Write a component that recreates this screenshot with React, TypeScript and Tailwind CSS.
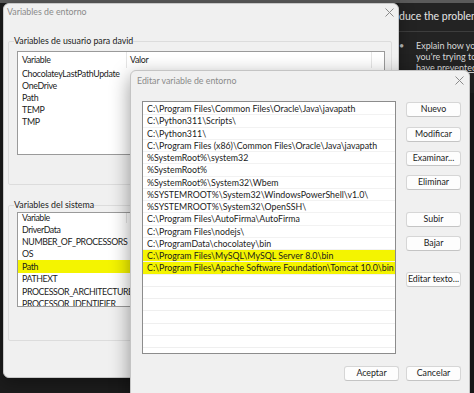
import React from 'react';

const font = { fontFamily: 'Lato, "Noto Sans", "Liberation Sans", sans-serif' };

const userVars = ['ChocolateyLastPathUpdate', 'OneDrive', 'Path', 'TEMP', 'TMP'];

const systemVars = [
  'DriverData',
  'NUMBER_OF_PROCESSORS',
  'OS',
  'Path',
  'PATHEXT',
  'PROCESSOR_ARCHITECTURE',
  'PROCESSOR_IDENTIFIER',
];

const paths = [
  'C:\\Program Files\\Common Files\\Oracle\\Java\\javapath',
  'C:\\Python311\\Scripts\\',
  'C:\\Python311\\',
  'C:\\Program Files (x86)\\Common Files\\Oracle\\Java\\javapath',
  '%SystemRoot%\\system32',
  '%SystemRoot%',
  '%SystemRoot%\\System32\\Wbem',
  '%SYSTEMROOT%\\System32\\WindowsPowerShell\\v1.0\\',
  '%SYSTEMROOT%\\System32\\OpenSSH\\',
  'C:\\Program Files\\AutoFirma\\AutoFirma',
  'C:\\Program Files\\nodejs\\',
  'C:\\ProgramData\\chocolatey\\bin',
  'C:\\Program Files\\MySQL\\MySQL Server 8.0\\bin',
  'C:\\Program Files\\Apache Software Foundation\\Tomcat 10.0\\bin',
];

function CloseIcon() {
  return (
    <svg width="9" height="9" viewBox="0 0 9 9" className="block">
      <path d="M0.5 0.5 L8.5 8.5 M8.5 0.5 L0.5 8.5" stroke="#8a8a8a" strokeWidth="1" fill="none" />
    </svg>
  );
}

function Btn({ label, className = '' }: { label: string; className?: string }) {
  return (
    <div
      className={
        'w-[55px] h-[15px] flex items-center justify-center whitespace-nowrap rounded-[3px] border border-[#d6d6d6] border-b-[#c4c4c4] bg-[#fdfdfd] text-[8.8px] text-[#1b1b1b] leading-none ' +
        className
      }
    >
      {label}
    </div>
  );
}

function EnvWindow() {
  return (
    <div className="absolute left-[3px] top-[3px] w-[396px] h-[375px] bg-[#f0f0f0] border border-[#c8c8c8] rounded-[6px] shadow-[0_4px_16px_rgba(0,0,0,0.35)] overflow-hidden">
      <div className="h-[16px] pl-[3px] flex items-center text-[8.8px] text-[#8a8a8a] justify-between pr-[4px]">
        <span>Variables de entorno</span>
        <CloseIcon />
      </div>
      <div className="px-[4px] pt-[14px] flex flex-col">
        <fieldset className="w-[384px] border border-[#dcdcdc] pl-[8px] pt-[3px] pb-[29px] rounded-[2px]">
          <legend className="-ml-[3px] text-[8.8px] leading-[14px] text-[#1b1b1b]">Variables de usuario para david</legend>
          <div className="w-[368px] h-[104px] bg-white border border-[#9a9a9a] overflow-hidden tracking-[-0.3px]">
            <div className="h-[16px] flex text-[8.8px] text-[#1b1b1b] items-center">
              <div className="w-[109px] pl-[4px] h-full flex items-center border-r border-[#e5e5e5]">Variable</div>
              <div className="w-[245px] pl-[3px] h-full flex items-center border-r border-[#e5e5e5]">Valor</div>
            </div>
            {userVars.map((v) => (
              <div key={v} className="h-[12px] pl-[4px] flex items-center text-[8.8px] text-[#1b1b1b]">
                {v}
              </div>
            ))}
          </div>
        </fieldset>
        <fieldset className="mt-[13px] w-[384px] border border-[#dcdcdc] pl-[8px] pt-0 pb-[33px] rounded-[2px]">
          <legend className="-ml-[3px] text-[8.8px] leading-[14px] text-[#1b1b1b]">Variables del sistema</legend>
          <div className="w-[368px] h-[95px] bg-white border border-[#9a9a9a] overflow-hidden tracking-[-0.4px]">
            <div className="h-[10px] flex text-[8.8px] text-[#1b1b1b] items-center">
              <div className="w-[109px] pl-[4px] h-full flex items-center border-r border-[#e5e5e5]">Variable</div>
            </div>
            {systemVars.map((v) => (
              <div
                key={v}
                className={
                  'h-[12.4px] pl-[4px] flex items-center text-[8.8px] text-[#1b1b1b] ' +
                  (v === 'Path' ? 'bg-[#f4f400]' : '')
                }
              >
                {v}
              </div>
            ))}
          </div>
        </fieldset>
      </div>
    </div>
  );
}

function EditWindow() {
  const empty = Array.from({ length: 7 });
  return (
    <div className="absolute left-[130px] top-[70px] w-[340px] h-[330px] bg-[#f0f0f0] border border-[#c4c4c4] rounded-[6px] shadow-[0_6px_20px_rgba(0,0,0,0.4)]">
      <div className="h-[19px] pl-[6px] pr-[5px] flex items-center justify-between text-[8.8px] text-[#8a8a8a]">
        <span>Editar variable de entorno</span>
        <CloseIcon />
      </div>
      <div className="flex pl-[11px] pt-[11px]">
        <div className="w-[254px] h-[253px] bg-white border border-[#8c8c8c] pt-[1px] overflow-hidden">
          {paths.map((p, i) => (
            <div
              key={p}
              className={
                'h-[12.25px] pl-[4px] flex items-center text-[8.8px] text-[#1b1b1b] whitespace-nowrap border-b border-[#f2f2f2] ' +
                (i >= 12 ? 'bg-[#f4f400] border-[#e8e800]' : '')
              }
            >
              {p}
            </div>
          ))}
          {empty.map((_, i) => (
            <div key={i} className="h-[12.25px] border-b border-[#efefef]" />
          ))}
        </div>
        <div className="ml-[10px] flex flex-col">
          <Btn label="Nuevo" className="mt-[1px]" />
          <Btn label="Modificar" className="mt-[10px]" />
          <Btn label="Examinar..." className="mt-[9px]" />
          <Btn label="Eliminar" className="mt-[9px]" />
          <Btn label="Subir" className="mt-[22px]" />
          <Btn label="Bajar" className="mt-[9px]" />
          <Btn label="Editar texto..." className="mt-[21px]" />
        </div>
      </div>
      <div className="flex justify-end gap-[7px] pr-[8px] mt-[12px]">
        <Btn label="Aceptar" />
        <Btn label="Cancelar" />
      </div>
    </div>
  );
}

export default function App() {
  return (
    <div className="relative w-[474px] h-[393px] overflow-hidden bg-[#1c1c1c]" style={font}>
      <div className="absolute left-0 top-0 w-[474px] h-[3px] bg-[#5a5a5a]" />
      <div className="absolute left-[399px] top-[3px] w-[75px] h-[90px] bg-[#232323] overflow-hidden">
        <div className="h-[29px] flex items-center text-[10.5px] text-[#e6e6e6] whitespace-nowrap border-b border-[#3d3d3d]">
          duce the problem
        </div>
        <div className="flex pt-[8px]">
          <span className="w-[17px] shrink-0 text-[9px] text-[#bdbdbd] leading-[11px]">•</span>
          <div className="text-[9px] leading-[11px] text-[#d8d8d8] whitespace-nowrap">
            <div>Explain how you</div>
            <div>you're trying to s</div>
            <div className="underline">have prevented y</div>
          </div>
        </div>
      </div>
      <EnvWindow />
      <EditWindow />
    </div>
  );
}
